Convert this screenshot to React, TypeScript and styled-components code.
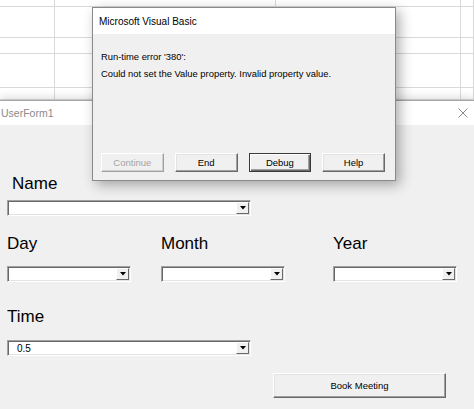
import React from "react";
import styled, { createGlobalStyle, css } from "styled-components";

const GlobalStyle = createGlobalStyle`
  html, body {
    margin: 0;
    padding: 0;
  }
  body {
    background: #f0f0f0;
    font-family: "Liberation Sans", Arial, sans-serif;
    overflow: hidden;
  }
`;

const Screen = styled.div`
  position: relative;
  width: 474px;
  height: 409px;
  overflow: hidden;
  background: #f0f0f0;
  display: flex;
  flex-direction: column;
`;

// worksheet grid showing behind the form
const Sheet = styled.div`
  display: grid;
  grid-template-columns: 55px 221px 185px 1fr;
  grid-template-rows: 7px 31px 16px 34px 1fr;
  height: 100px;
  background: #fff;
  flex-shrink: 0;
`;

const Cell = styled.div`
  border-right: 1px solid #d9d9d9;
  border-bottom: 1px solid #d9d9d9;
`;

const FormWindow = styled.div`
  flex: 1;
  display: flex;
  flex-direction: column;
  border-top: 1px solid #a8a8a8;
  box-shadow: 0 -3px 8px rgba(0, 0, 0, 0.13);
`;

const FormTitleBar = styled.div`
  height: 24px;
  background: #fff;
  display: flex;
  align-items: center;
  justify-content: space-between;
  padding: 0 6px 0 1px;
  font-size: 10.5px;
  color: #8a8a8a;
`;

const FormBody = styled.div`
  flex: 1;
  padding: 49px 0 0 7px;
`;

const FieldLabel = styled.div<{ $indent?: number; $gap?: number }>`
  font-size: 17px;
  line-height: 20px;
  color: #000;
  margin-left: ${(p) => p.$indent ?? 0}px;
  margin-top: ${(p) => p.$gap ?? 0}px;
`;

const DateRow = styled.div`
  display: grid;
  grid-template-columns: 154px 172px 124px;
  margin-top: 18px;
`;

const Combo = styled.div<{ $width: number; $gap: number }>`
  box-sizing: border-box;
  width: ${(p) => p.$width}px;
  height: 16px;
  margin-top: ${(p) => p.$gap}px;
  display: flex;
  background: #fff;
  border: 1px solid;
  border-color: #a0a0a0 #fff #fff #a0a0a0;
  box-shadow: inset 1px 1px #696969, inset -1px -1px #e3e3e3;
`;

const ComboValue = styled.span`
  flex: 1;
  padding: 1px 0 0 9px;
  font-size: 10px;
  line-height: 13px;
  color: #000;
`;

const DropButton = styled.span`
  box-sizing: border-box;
  width: 13px;
  margin: 1px 1px 1px 0;
  display: flex;
  align-items: center;
  justify-content: center;
  background: #f0f0f0;
  border: 1px solid;
  border-color: #fff #696969 #696969 #fff;
`;

const ActionRow = styled.div`
  display: flex;
  padding-left: 266px;
  margin-top: 17px;
`;

const PushButton = styled.button<{ $width: number; $height: number; $default?: boolean }>`
  box-sizing: border-box;
  width: ${(p) => p.$width}px;
  height: ${(p) => p.$height}px;
  padding: 0;
  font-family: "Liberation Sans", Arial, sans-serif;
  font-size: 9.5px;
  color: #000;
  background: #f0f0f0;
  border: 1px solid;
  border-color: #fff #696969 #696969 #fff;
  box-shadow: inset -1px -1px #a0a0a0, inset 1px 1px #e3e3e3;
  ${(p) =>
    p.$default &&
    css`
      border-color: #3a3a3a;
      box-shadow: inset 1px 1px #fff, inset -1px -1px #696969, inset -2px -2px #a0a0a0;
    `}
  &:disabled {
    color: #a3a3a3;
    border-color: #fff #a0a0a0 #a0a0a0 #fff;
    box-shadow: inset -1px -1px #cfcfcf;
  }
`;

// error box
const Dialog = styled.div`
  position: absolute;
  left: 92px;
  top: 7px;
  width: 304px;
  height: 174px;
  box-sizing: border-box;
  border: 1px solid #8a8a8a;
  background: #f0f0f0;
  box-shadow: 4px 4px 12px rgba(0, 0, 0, 0.32);
  display: flex;
  flex-direction: column;
`;

const DialogTitle = styled.div`
  height: 26px;
  background: #fff;
  padding: 1px 0 0 6px;
  box-sizing: border-box;
  font-size: 10px;
  line-height: 25px;
  color: #000;
`;

const DialogBody = styled.div`
  flex: 1;
  display: flex;
  flex-direction: column;
  padding: 17px 10px 8px 8px;
`;

const Message = styled.p<{ $gap?: number }>`
  margin: ${(p) => p.$gap ?? 0}px 0 0;
  font-size: 9.4px;
  line-height: 12px;
  color: #000;
`;

const DialogButtons = styled.div`
  margin-top: auto;
  display: flex;
  gap: 11px;
`;

const DownArrow = () => (
  <svg width="6" height="4" viewBox="0 0 6 4">
    <polygon points="0,0 6,0 3,3.5" fill="#000" />
  </svg>
);

const CloseIcon = () => (
  <svg width="10" height="10" viewBox="0 0 10 10">
    <path d="M0.5 0.5 L9.5 9.5 M9.5 0.5 L0.5 9.5" stroke="#8a8a8a" strokeWidth="1" />
  </svg>
);

function ComboBox({ width, gap, value }: { width: number; gap: number; value?: string }) {
  return (
    <Combo $width={width} $gap={gap}>
      <ComboValue>{value}</ComboValue>
      <DropButton>
        <DownArrow />
      </DropButton>
    </Combo>
  );
}

export default function App() {
  return (
    <>
      <GlobalStyle />
      <Screen>
        <Sheet>
          {Array.from({ length: 20 }).map((_, i) => (
            <Cell key={i} />
          ))}
        </Sheet>

        <FormWindow>
          <FormTitleBar>
            <span>UserForm1</span>
            <CloseIcon />
          </FormTitleBar>
          <FormBody>
            <FieldLabel $indent={5}>Name</FieldLabel>
            <ComboBox width={244} gap={6} />

            <DateRow>
              <div>
                <FieldLabel>Day</FieldLabel>
                <ComboBox width={124} gap={12} />
              </div>
              <div>
                <FieldLabel>Month</FieldLabel>
                <ComboBox width={124} gap={12} />
              </div>
              <div>
                <FieldLabel>Year</FieldLabel>
                <ComboBox width={124} gap={12} />
              </div>
            </DateRow>

            <FieldLabel $gap={25}>Time</FieldLabel>
            <ComboBox width={244} gap={13} value="0.5" />

            <ActionRow>
              <PushButton $width={173} $height={25}>
                Book Meeting
              </PushButton>
            </ActionRow>
          </FormBody>
        </FormWindow>

        <Dialog>
          <DialogTitle>Microsoft Visual Basic</DialogTitle>
          <DialogBody>
            <Message>Run-time error '380':</Message>
            <Message $gap={5}>Could not set the Value property. Invalid property value.</Message>
            <DialogButtons>
              <PushButton $width={63} $height={19} disabled>
                Continue
              </PushButton>
              <PushButton $width={63} $height={19}>
                End
              </PushButton>
              <PushButton $width={63} $height={19} $default>
                Debug
              </PushButton>
              <PushButton $width={63} $height={19}>
                Help
              </PushButton>
            </DialogButtons>
          </DialogBody>
        </Dialog>
      </Screen>
    </>
  );
}
